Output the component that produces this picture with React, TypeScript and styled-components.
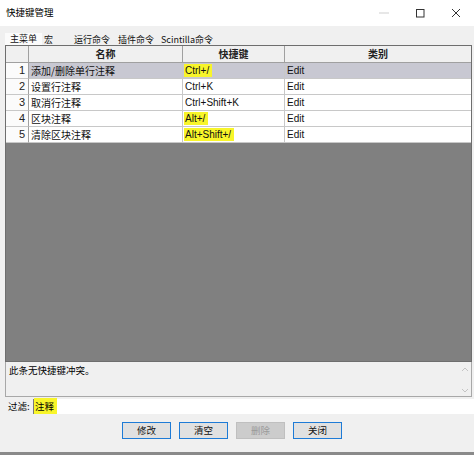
import React from "react";
import styled, { createGlobalStyle } from "styled-components";

const Global = createGlobalStyle`
  html, body { margin: 0; padding: 0; }
  body {
    width: 474px; height: 455px; overflow: hidden;
    font-family: "Noto Sans CJK SC", "Liberation Sans", sans-serif;
    font-size: 10px; color: #000; background: #f0f0f0;
  }
`;

const Window = styled.div`
  width: 474px; height: 455px; display: flex; flex-direction: column;
  background: #f0f0f0;
`;

const TitleBar = styled.div`
  height: 26px; background: #fff; display: flex; align-items: center;
  padding-left: 6px; flex-shrink: 0;
`;
const TitleText = styled.div`
  flex: 1; font-size: 9.5px; line-height: 12px; margin-top: -2px;
`;
const Controls = styled.div`
  display: flex; align-items: center; height: 100%;
`;
const CtrlBtn = styled.div`
  width: 36px; height: 100%; display: flex; align-items: center; justify-content: center;
`;

const Body = styled.div`
  flex: 1; display: flex; flex-direction: column; padding-left: 5px; padding-right: 2px;
`;

const Tabs = styled.div`
  height: 19px; display: flex; align-items: flex-end; padding-top: 0;
`;
const Tab = styled.div<{ $active?: boolean; $w: number }>`
  width: ${p => p.$w}px; height: ${p => (p.$active ? 12 : 11)}px;
  background: ${p => (p.$active ? "#fbfbfb" : "transparent")};
  font-size: 9px; line-height: 11px; padding-left: ${p => (p.$active ? 5 : 2)}px;
  box-sizing: border-box; white-space: nowrap; color: #111;
`;

const Grid = styled.div`
  height: 317px; border: 1px solid #6e6e6e; background: #808080;
  display: flex; flex-direction: column; box-sizing: border-box; flex-shrink: 0;
`;
const Row = styled.div`
  display: grid; grid-template-columns: 23px 154px 102px 1fr; height: 16px;
`;
const HeaderRow = styled(Row)`
  height: 17px;
`;
const HeadCell = styled.div`
  background: #f0f0f0; border-right: 1px solid #a0a0a0; border-bottom: 1px solid #a0a0a0;
  font-weight: 700; font-size: 10px; line-height: 16px; text-align: center; color: #222;
  &:last-child { border-right: none; }
`;
const NumCell = styled.div`
  background: #fbfbfb; border-right: 1px solid #a0a0a0; border-bottom: 1px solid #c8c8c8;
  text-align: right; padding-right: 3px; font-family: "Liberation Sans", sans-serif;
  font-size: 11px; line-height: 15px; color: #222;
`;
const Cell = styled.div<{ $sel?: boolean; $latin?: boolean }>`
  background: ${p => (p.$sel ? "#c8c8d2" : "#fff")};
  border-right: 1px solid #c8c8c8; border-bottom: 1px solid #c8c8c8;
  padding-left: 2px; line-height: 15px; white-space: nowrap; overflow: hidden;
  font-family: ${p => (p.$latin ? '"Liberation Sans", sans-serif' : '"Noto Sans CJK SC", sans-serif')};
  font-size: ${p => (p.$latin ? "10px" : "10px")}; color: #111;
  &:last-child { border-right: none; }
`;
const Mark = styled.span`
  background: #f8f52a; padding: 1px 3px 1px 1px; margin-left: -1px;
`;

const Message = styled.div`
  height: 35px; border: 1px solid #a8a8a8; border-top: none; background: #f0f0f0;
  display: flex; box-sizing: border-box; flex-shrink: 0;
`;
const MsgText = styled.div`
  flex: 1; padding: 2px 0 0 3px; font-size: 9.5px; line-height: 12px;
`;
const ScrollBar = styled.div`
  width: 13px; display: flex; flex-direction: column; justify-content: space-between;
  align-items: center; padding: 5px 0 3px; box-sizing: border-box;
`;

const FilterRow = styled.div`
  height: 18px; display: flex; align-items: center; margin-left: -5px; margin-right: -2px;
`;
const FilterLabel = styled.div`
  width: 33px; padding-left: 8px; box-sizing: border-box; font-size: 9.5px; white-space: nowrap;
`;
const FilterInput = styled.div`
  flex: 1; height: 15px; background: #fff; border-left: 1px solid #7a7a7a;
  font-size: 9.5px; line-height: 14px; padding-left: 1px;
`;

const Buttons = styled.div`
  display: flex; gap: 8px; padding-left: 122px; padding-top: 7px; margin-left: -5px;
`;
const Button = styled.div<{ $disabled?: boolean }>`
  width: 49px; height: 17px; box-sizing: border-box;
  border: 1px solid ${p => (p.$disabled ? "#bfbfbf" : "#1e7bd6")};
  background: ${p => (p.$disabled ? "#cccccc" : "#e1e1e1")};
  color: ${p => (p.$disabled ? "#9a9a9a" : "#111")};
  font-size: 9.5px; line-height: 15px; text-align: center;
`;

const BottomEdge = styled.div`
  height: 3px; background: #8a8a8a; margin-top: auto; margin-left: -5px; margin-right: -2px;
`;

const rows = [
  { n: 1, name: "添加/删除单行注释", key: "Ctrl+/", mark: true, sel: true },
  { n: 2, name: "设置行注释", key: "Ctrl+K", mark: false, sel: false },
  { n: 3, name: "取消行注释", key: "Ctrl+Shift+K", mark: false, sel: false },
  { n: 4, name: "区块注释", key: "Alt+/", mark: true, sel: false },
  { n: 5, name: "清除区块注释", key: "Alt+Shift+/", mark: true, sel: false },
];

export default function App() {
  return (
    <Window>
      <Global />
      <TitleBar>
        <TitleText>快捷键管理</TitleText>
        <Controls>
          <CtrlBtn>
            <svg width="12" height="10" viewBox="0 0 12 10"><line x1="1" y1="5" x2="11" y2="5" stroke="#cfcfcf" strokeWidth="1" /></svg>
          </CtrlBtn>
          <CtrlBtn>
            <svg width="10" height="10" viewBox="0 0 10 10"><rect x="1.5" y="1.5" width="7.5" height="7.5" fill="none" stroke="#333" strokeWidth="1" /></svg>
          </CtrlBtn>
          <CtrlBtn>
            <svg width="10" height="10" viewBox="0 0 10 10"><path d="M1 1 L9 9 M9 1 L1 9" stroke="#333" strokeWidth="1" /></svg>
          </CtrlBtn>
        </Controls>
      </TitleBar>
      <Body>
        <Tabs>
          <Tab $active $w={37}>主菜单</Tab>
          <Tab $w={30}>宏</Tab>
          <Tab $w={44}>运行命令</Tab>
          <Tab $w={43}>插件命令</Tab>
          <Tab $w={60}>Scintilla命令</Tab>
        </Tabs>
        <Grid>
          <HeaderRow>
            <HeadCell />
            <HeadCell>名称</HeadCell>
            <HeadCell>快捷键</HeadCell>
            <HeadCell>类别</HeadCell>
          </HeaderRow>
          {rows.map(r => (
            <Row key={r.n}>
              <NumCell>{r.n}</NumCell>
              <Cell $sel={r.sel}>{r.name}</Cell>
              <Cell $sel={r.sel} $latin>{r.mark ? <Mark>{r.key}</Mark> : r.key}</Cell>
              <Cell $sel={r.sel} $latin>Edit</Cell>
            </Row>
          ))}
        </Grid>
        <Message>
          <MsgText>此条无快捷键冲突。</MsgText>
          <ScrollBar>
            <svg width="8" height="5" viewBox="0 0 8 5"><path d="M1 4 L4 1 L7 4" fill="none" stroke="#c4c4c4" strokeWidth="1" /></svg>
            <svg width="8" height="5" viewBox="0 0 8 5"><path d="M1 1 L4 4 L7 1" fill="none" stroke="#c4c4c4" strokeWidth="1" /></svg>
          </ScrollBar>
        </Message>
        <FilterRow>
          <FilterLabel>过滤:</FilterLabel>
          <FilterInput><Mark>注释</Mark></FilterInput>
        </FilterRow>
        <Buttons>
          <Button>修改</Button>
          <Button>清空</Button>
          <Button $disabled>删除</Button>
          <Button>关闭</Button>
        </Buttons>
        <BottomEdge />
      </Body>
    </Window>
  );
}
